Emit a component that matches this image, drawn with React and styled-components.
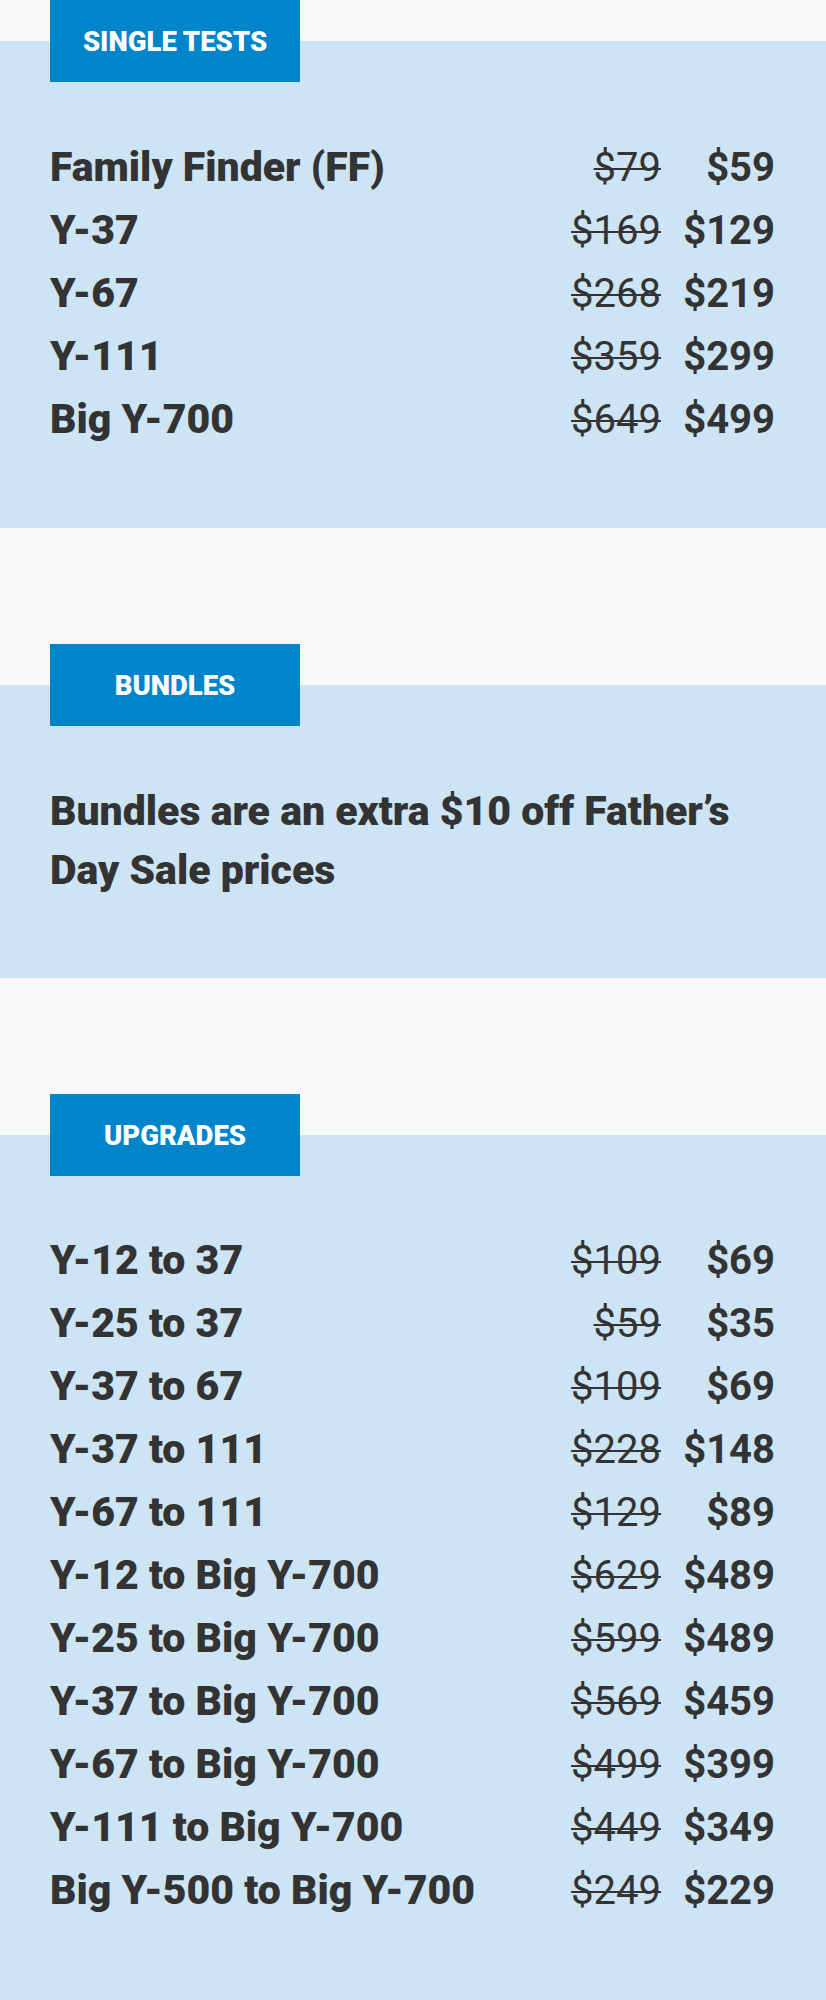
import React from "react";
import styled, { createGlobalStyle } from "styled-components";

const Global = createGlobalStyle`
  html, body { margin: 0; padding: 0; }
  body {
    background: #f8f8f8;
    font-family: Roboto, "Liberation Sans", sans-serif;
    color: #333333;
  }
`;

const Page = styled.div`
  display: flex;
  flex-direction: column;
  width: 826px;
`;

const Section = styled.section`
  display: flex;
  flex-direction: column;
  & + & { margin-top: 116px; }
`;

const HeaderBand = styled.div`
  height: 82px;
  padding-left: 50px;
  display: flex;
  background: linear-gradient(to bottom, #f8f8f8 41px, #cce4f3 41px);
`;

const Tab = styled.div`
  width: 250px;
  height: 82px;
  background: #0085ca;
  color: #ffffff;
  display: flex;
  align-items: center;
  justify-content: center;
  font-weight: 900;
  font-size: 27.5px;
`;

const Panel = styled.div`
  background: #cce4f3;
  padding: ${(p) => p.$top}px 51px ${(p) => p.$bottom}px 50px;
  display: flex;
  flex-direction: column;
`;

const Row = styled.div`
  display: grid;
  grid-template-columns: 1fr 100px 114px;
  align-items: baseline;
  height: 63px;
  line-height: 63px;
  font-size: 41px;
`;

const Name = styled.span`
  font-weight: 900;
  white-space: nowrap;
`;

const OldPrice = styled.span`
  font-weight: 400;
  font-size: 40px;
  text-align: right;
  text-decoration: line-through;
  text-decoration-thickness: 2px;
`;

const NewPrice = styled.span`
  font-weight: 700;
  font-size: 40px;
  text-align: right;
`;

const Note = styled.p`
  margin: 0;
  font-size: 41px;
  line-height: 59px;
  font-weight: 900;
`;

const single = [
  ["Family Finder (FF)", "$79", "$59"],
  ["Y-37", "$169", "$129"],
  ["Y-67", "$268", "$219"],
  ["Y-111", "$359", "$299"],
  ["Big Y-700", "$649", "$499"],
];

const upgrades = [
  ["Y-12 to 37", "$109", "$69"],
  ["Y-25 to 37", "$59", "$35"],
  ["Y-37 to 67", "$109", "$69"],
  ["Y-37 to 111", "$228", "$148"],
  ["Y-67 to 111", "$129", "$89"],
  ["Y-12 to Big Y-700", "$629", "$489"],
  ["Y-25 to Big Y-700", "$599", "$489"],
  ["Y-37 to Big Y-700", "$569", "$459"],
  ["Y-67 to Big Y-700", "$499", "$399"],
  ["Y-111 to Big Y-700", "$449", "$349"],
  ["Big Y-500 to Big Y-700", "$249", "$229"],
];

function PriceRows({ items }) {
  return items.map(([name, oldP, newP]) => (
    <Row key={name}>
      <Name>{name}</Name>
      <OldPrice>{oldP}</OldPrice>
      <NewPrice>{newP}</NewPrice>
    </Row>
  ));
}

export default function App() {
  return (
    <>
      <Global />
      <Page>
        <Section>
          <HeaderBand>
            <Tab>SINGLE TESTS</Tab>
          </HeaderBand>
          <Panel $top={54} $bottom={77}>
            <PriceRows items={single} />
          </Panel>
        </Section>
        <Section>
          <HeaderBand>
            <Tab>BUNDLES</Tab>
          </HeaderBand>
          <Panel $top={56} $bottom={78}>
            <Note>
              Bundles are an extra $10 off Father’s
              <br />
              Day Sale prices
            </Note>
          </Panel>
        </Section>
        <Section>
          <HeaderBand>
            <Tab>UPGRADES</Tab>
          </HeaderBand>
          <Panel $top={53} $bottom={120}>
            <PriceRows items={upgrades} />
          </Panel>
        </Section>
      </Page>
    </>
  );
}
